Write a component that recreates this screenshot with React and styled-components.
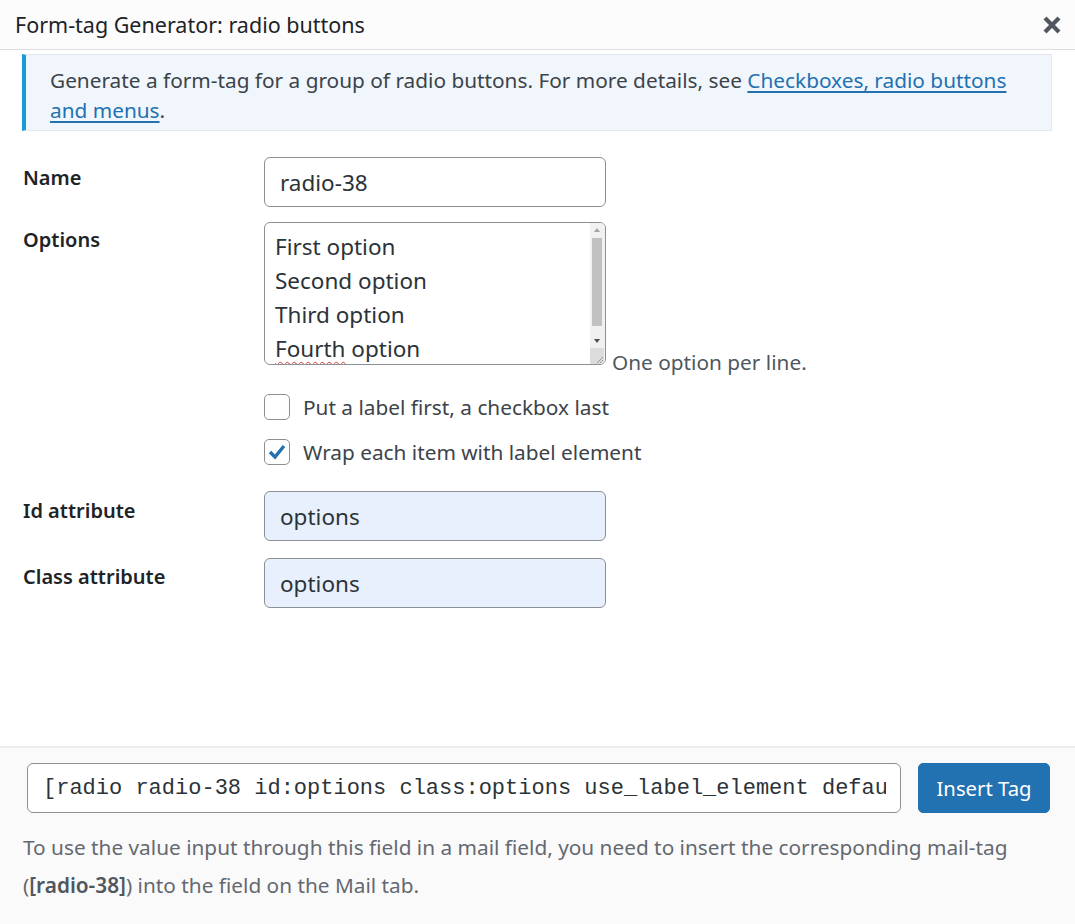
import React from "react";
import styled, { createGlobalStyle } from "styled-components";

const GlobalStyle = createGlobalStyle`
  html, body {
    margin: 0;
    padding: 0;
    background: #fff;
  }
  body {
    font-family: "Noto Sans", "Open Sans", sans-serif;
    color: #1d2327;
  }
`;

const Dialog = styled.div`
  width: 1075px;
  height: 924px;
  display: flex;
  flex-direction: column;
  background: #fff;
  overflow: hidden;
`;

const Header = styled.div`
  height: 50px;
  flex: none;
  display: flex;
  align-items: center;
  justify-content: space-between;
  padding: 0 12px 0 15px;
  background: #fcfcfc;
  border-bottom: 1px solid #dcdcde;
  box-sizing: border-box;
`;

const Title = styled.h1`
  margin: 0;
  font-size: 21.5px;
  font-weight: 400;
  color: #1d2327;
`;

const Close = styled.button`
  border: 0;
  background: none;
  padding: 0;
  width: 22px;
  height: 22px;
  display: flex;
  align-items: center;
  justify-content: center;
  cursor: pointer;
`;

const Main = styled.div`
  flex: 1;
  padding: 4px 23px 0 22px;
`;

const Notice = styled.div`
  background: #f0f6fc;
  border: 1px solid #e4e8ec;
  border-left: 4px solid #1a9ad6;
  padding: 10px 20px 5px 24px;
  font-size: 20.8px;
  line-height: 30px;
  color: #3c434a;

  a {
    color: #2271b1;
    text-decoration: underline;
    text-underline-offset: 3px;
  }
`;

const Form = styled.div`
  display: flex;
  flex-direction: column;
  padding: 26px 0 0 1px;
`;

const Row = styled.div`
  display: grid;
  grid-template-columns: 241px 1fr;
  align-items: start;
  margin-top: ${(p) => p.gap || 0}px;
`;

const Label = styled.div`
  font-size: 20px;
  font-weight: 600;
  line-height: 30px;
  padding-top: ${(p) => p.offset || 3}px;
  color: #1d2327;
`;

const Field = styled.div`
  display: flex;
  flex-direction: column;
`;

const TextInput = styled.div`
  width: 342px;
  height: 50px;
  box-sizing: border-box;
  border: 1px solid #8c8f94;
  border-radius: 6px;
  background: ${(p) => (p.filled ? "#e8f0fe" : "#fff")};
  padding: 0 15px;
  display: flex;
  align-items: center;
  font-size: 22.5px;
  color: #2c3338;
`;

const TextAreaLine = styled.div`
  display: flex;
  align-items: flex-end;
`;

const TextArea = styled.div`
  width: 342px;
  height: 143px;
  box-sizing: border-box;
  border: 1px solid #8c8f94;
  border-radius: 6px;
  display: flex;
  overflow: hidden;
  background: #fff;
`;

const Lines = styled.div`
  flex: 1;
  padding: 7px 10px 0 10px;
  font-size: 22.5px;
  line-height: 34px;
  color: #2c3338;
`;

const Misspelled = styled.span`
  text-decoration: underline wavy #d63638;
  text-decoration-thickness: 1px;
  text-underline-offset: 4px;
`;

const Scrollbar = styled.div`
  width: 14px;
  display: flex;
  flex-direction: column;
  align-items: center;
  background: #f1f1f1;
  padding-right: 1px;
`;

const Arrow = styled.div`
  height: 14px;
  display: flex;
  align-items: center;
  justify-content: center;
`;

const Thumb = styled.div`
  width: 10px;
  height: 88px;
  background: #c1c1c1;
  margin: 1px 0 0;
`;

const Track = styled.div`
  flex: 1;
`;

const Resize = styled.div`
  height: 16px;
  width: 14px;
  display: flex;
  align-items: flex-end;
  justify-content: flex-end;
  background: #dcdcdc;
`;

const Hint = styled.span`
  font-size: 20.8px;
  color: #50575e;
  margin-left: 6px;
  line-height: 22px;
  margin-bottom: -8px;
`;

const CheckRow = styled.label`
  display: flex;
  align-items: center;
  gap: 13px;
  font-size: 20.8px;
  color: #3c434a;
  margin-top: ${(p) => p.gap || 0}px;
  height: 26px;
`;

const Box = styled.span`
  width: 26px;
  height: 26px;
  box-sizing: border-box;
  border: 1px solid #8c8f94;
  border-radius: 5px;
  background: #fff;
  display: flex;
  align-items: center;
  justify-content: center;
`;

const Footer = styled.div`
  flex: none;
  height: 178px;
  box-sizing: border-box;
  border-top: 2px solid #ececec;
  background: #fafafa;
  padding: 15px 25px 0 27px;
`;

const TagLine = styled.div`
  display: flex;
  gap: 17px;
`;

const TagInput = styled.div`
  width: 874px;
  height: 50px;
  box-sizing: border-box;
  border: 1px solid #8c8f94;
  border-radius: 6px;
  background: #fff;
  padding: 0 14px 0 15px;
  display: flex;
  align-items: center;
  font-family: "Liberation Mono", "DejaVu Sans Mono", monospace;
  font-size: 22px;
  color: #2c3338;
`;

const TagText = styled.span`
  flex: 1;
  white-space: nowrap;
  overflow: hidden;
`;

const InsertButton = styled.button`
  width: 132px;
  height: 50px;
  border: 1px solid #2271b1;
  border-radius: 5px;
  background: #2271b1;
  color: #fff;
  font-family: inherit;
  font-size: 20.3px;
  cursor: pointer;
`;

const Note = styled.p`
  margin: 15px 0 0 -4px;
  font-size: 20.8px;
  line-height: 38px;
  color: #646970;

  strong {
    font-weight: 600;
    color: #50575e;
  }
`;

const CloseIcon = () => (
  <svg width="20" height="20" viewBox="0 0 20 20">
    <path d="M3 3 L17 17 M17 3 L3 17" stroke="#50575e" strokeWidth="4.2" strokeLinecap="butt" />
  </svg>
);

const Check = () => (
  <svg width="20" height="20" viewBox="0 0 20 20">
    <path d="M3 10 L8 15 L17 4" fill="none" stroke="#2271b1" strokeWidth="3.4" />
  </svg>
);

export default function App() {
  return (
    <>
      <GlobalStyle />
      <Dialog>
        <Header>
          <Title>Form-tag Generator: radio buttons</Title>
          <Close aria-label="Close">
            <CloseIcon />
          </Close>
        </Header>
        <Main>
          <Notice>
            Generate a form-tag for a group of radio buttons. For more details, see{" "}
            <a href="#">Checkboxes, radio buttons and menus</a>.
          </Notice>
          <Form>
            <Row>
              <Label offset={6}>Name</Label>
              <Field>
                <TextInput>radio-38</TextInput>
              </Field>
            </Row>
            <Row gap={15}>
              <Label offset={3}>Options</Label>
              <Field>
                <TextAreaLine>
                  <TextArea>
                    <Lines>
                      <div>First option</div>
                      <div>Second option</div>
                      <div>Third option</div>
                      <div>
                        <Misspelled>Fourth</Misspelled> option
                      </div>
                    </Lines>
                    <Scrollbar>
                      <Arrow>
                        <svg width="6" height="4" viewBox="0 0 6 4">
                          <path d="M0 4 L3 0 L6 4Z" fill="#a3a3a3" />
                        </svg>
                      </Arrow>
                      <Thumb />
                      <Track />
                      <Arrow>
                        <svg width="6" height="4" viewBox="0 0 6 4">
                          <path d="M0 0 L6 0 L3 4Z" fill="#505050" />
                        </svg>
                      </Arrow>
                      <Resize>
                        <svg width="10" height="10" viewBox="0 0 10 10">
                          <path d="M9 3 L3 9 M9 6 L6 9" stroke="#9a9a9a" strokeWidth="1" />
                        </svg>
                      </Resize>
                    </Scrollbar>
                  </TextArea>
                  <Hint>One option per line.</Hint>
                </TextAreaLine>
                <CheckRow gap={29}>
                  <Box />
                  Put a label first, a checkbox last
                </CheckRow>
                <CheckRow gap={19}>
                  <Box>
                    <Check />
                  </Box>
                  Wrap each item with label element
                </CheckRow>
              </Field>
            </Row>
            <Row gap={26}>
              <Label offset={5}>Id attribute</Label>
              <Field>
                <TextInput filled>options</TextInput>
              </Field>
            </Row>
            <Row gap={17}>
              <Label offset={4}>Class attribute</Label>
              <Field>
                <TextInput filled>options</TextInput>
              </Field>
            </Row>
          </Form>
        </Main>
        <Footer>
          <TagLine>
            <TagInput>
              <TagText>[radio radio-38 id:options class:options use_label_element default:1 "First option" "Second option" "Third option" "Fourth option"]</TagText>
            </TagInput>
            <InsertButton>Insert Tag</InsertButton>
          </TagLine>
          <Note>
            To use the value input through this field in a mail field, you need to insert the corresponding mail-tag
            (<strong>[radio-38]</strong>) into the field on the Mail tab.
          </Note>
        </Footer>
      </Dialog>
    </>
  );
}
